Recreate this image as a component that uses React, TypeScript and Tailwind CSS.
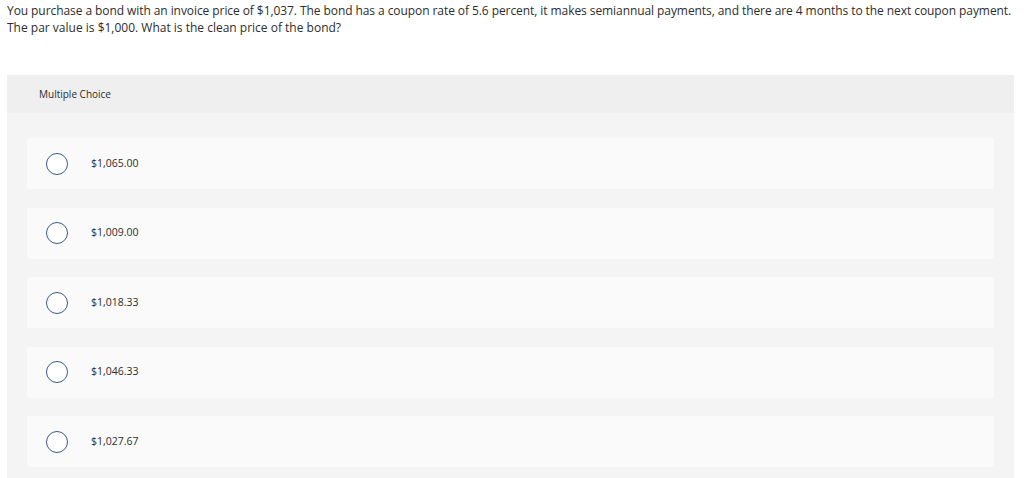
import React from "react";

const options = ["$1,065.00", "$1,009.00", "$1,018.33", "$1,046.33", "$1,027.67"];

export default function App() {
  return (
    <div
      className="w-[1024px] h-[478px] bg-white text-[#2d2d2d] overflow-hidden"
      style={{ fontFamily: "'Open Sans', sans-serif" }}
    >
      <div className="pl-[7px] pt-[2px] text-[12px] leading-[17px] whitespace-nowrap">
        <p>
          <span className="tracking-[-0.075px]">
            You purchase a bond with an invoice price of $1,037. The bond has a coupon rate of 5.6 percent, it makes semiannual payments, and there are 4 months to the next coupon payment.
          </span>
          <br />
          The par value is $1,000. What is the clean price of the bond?
        </p>
      </div>
      <div className="ml-[7px] mr-[10px] mt-[39px] rounded-t-[2px] bg-[#f4f4f4]">
        <div className="h-[38px] bg-[#efefef] pl-[32px] flex items-center text-[10px]">
          Multiple Choice
        </div>
        <div className="px-[20px] pt-[25px] flex flex-col gap-[18.5px] pb-[12px]">
          {options.map((o) => (
            <div key={o} className="h-[51px] bg-[#fafafa] rounded-[2px] flex items-center pl-[19px]">
              <span className="w-[22px] h-[22px] rounded-full border border-[#3a5a8c] bg-white shrink-0" />
              <span className="ml-[23px] text-[10.5px]">{o}</span>
            </div>
          ))}
        </div>
      </div>
    </div>
  );
}
